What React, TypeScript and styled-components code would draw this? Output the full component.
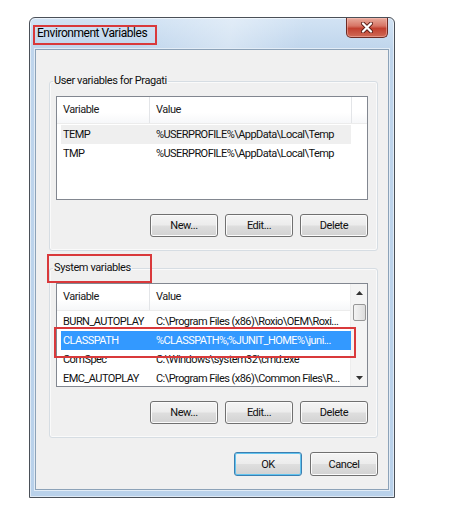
import React from 'react';
import styled, { createGlobalStyle } from 'styled-components';

interface EnvVar {
  name: string;
  value: string;
  hovered?: boolean;
  selected?: boolean;
  marked?: boolean;
}

const userVars: EnvVar[] = [
  { name: 'TEMP', value: '%USERPROFILE%\\AppData\\Local\\Temp', hovered: true },
  { name: 'TMP', value: '%USERPROFILE%\\AppData\\Local\\Temp' },
];

const systemVars: EnvVar[] = [
  { name: 'BURN_AUTOPLAY', value: 'C:\\Program Files (x86)\\Roxio\\OEM\\Roxi...' },
  { name: 'CLASSPATH', value: '%CLASSPATH%;%JUNIT_HOME%\\juni...', selected: true, marked: true },
  { name: 'ComSpec', value: 'C:\\Windows\\system32\\cmd.exe' },
  { name: 'EMC_AUTOPLAY', value: 'C:\\Program Files (x86)\\Common Files\\R...' },
];

const GlobalStyle = createGlobalStyle`
  html, body {
    margin: 0;
    padding: 0;
    background: #ffffff;
  }
  body {
    font-family: Roboto, "Liberation Sans", Arial, sans-serif;
    color: #111;
  }
`;

const Page = styled.div`
  width: 453px;
  height: 528px;
  box-sizing: border-box;
  padding: 17px 0 0 29px;
`;

const Window = styled.div`
  width: 366px;
  height: 481px;
  box-sizing: border-box;
  border: 1px solid #4a5058;
  border-radius: 6px 6px 0 0;
  background:
    linear-gradient(100deg, rgba(255,255,255,0) 30%, rgba(255,255,255,0.35) 55%, rgba(255,255,255,0) 75%) top / 100% 32px no-repeat,
    linear-gradient(180deg, #d2e3f4 0, #bfd5ec 32px, #b9d1ea 100%);
  box-shadow: inset 0 0 0 1px rgba(255, 255, 255, 0.55);
  display: flex;
  flex-direction: column;
`;

const TitleBar = styled.div`
  height: 31px;
  flex: none;
  display: flex;
  justify-content: space-between;
  align-items: flex-start;
  padding: 0 6px 0 3px;
`;

const Title = styled.span`
  position: relative;
  margin-top: 7px;
  padding: 0 0 0 4px;
  font-size: 12px;
  line-height: 16px;
  letter-spacing: -0.45px;
  color: #000;

  &::after {
    content: '';
    position: absolute;
    top: 0;
    left: 0;
    right: -10px;
    bottom: -4px;
    border: 2px solid #d9393b;
  }
`;

const CloseButton = styled.div`
  width: 42px;
  height: 20px;
  box-sizing: border-box;
  border: 1px solid #6d2b24;
  border-top: none;
  border-radius: 0 0 5px 5px;
  background: linear-gradient(180deg, #e8aa9c 0%, #d77565 42%, #c2402f 55%, #cf6a56 100%);
  box-shadow: inset 0 0 0 1px rgba(255, 200, 190, 0.45);
  display: flex;
  align-items: center;
  justify-content: center;
`;

const Client = styled.div`
  flex: none;
  height: 441px;
  margin: 0 5px;
  box-sizing: border-box;
  border: 1px solid #8ca2b8;
  box-shadow: 0 0 0 1px #e2ecf6;
  background: #f0f0f0;
  padding: 23px 10px 0 13px;
  display: flex;
  flex-direction: column;
`;

const Group = styled.fieldset`
  margin: 0 0 9px;
  padding: 7px 9px 13px 6px;
  border: 1px solid #d6dde3;
  border-radius: 3px;
  box-shadow: inset 0 0 0 1px #fafafa;
  min-width: 0;
`;

const Legend = styled.legend<{ $marked?: boolean }>`
  position: relative;
  margin-left: -3px;
  padding: 0 1px;
  font-size: 11px;
  line-height: 16px;
  letter-spacing: -0.4px;
  color: #111;

  &::after {
    content: '';
    display: ${(p) => (p.$marked ? 'block' : 'none')};
    position: absolute;
    top: -6px;
    left: -6px;
    right: -20px;
    bottom: -7px;
    border: 2px solid #d9393b;
  }
`;

const ListBox = styled.div`
  height: 104px;
  box-sizing: border-box;
  border: 1px solid #828790;
  background: #ffffff;
  display: flex;
`;

const ListMain = styled.div`
  flex: 1;
  min-width: 0;
  display: flex;
  flex-direction: column;
`;

const Header = styled.div`
  height: 26px;
  flex: none;
  display: flex;
  background: linear-gradient(180deg, #ffffff 0%, #ffffff 60%, #f6f7f9 100%);
  border-bottom: 1px solid #ececec;
`;

const HeaderCell = styled.div<{ $width?: number }>`
  ${(p) => (p.$width ? `width: ${p.$width}px;` : 'flex: 1;')}
  flex-shrink: 0;
  box-sizing: border-box;
  border-right: 1px solid #e3e5e8;
  padding-left: 6px;
  font-size: 11px;
  line-height: 26px;
  letter-spacing: -0.5px;
  color: #1a1a1a;

  &:last-child {
    border-right: none;
  }
`;

const Rows = styled.div`
  padding: 1px 0 0 4px;
  display: flex;
  flex-direction: column;
`;

const Row = styled.div<{ $hovered?: boolean; $selected?: boolean; $marked?: boolean }>`
  position: relative;
  width: 290px;
  height: 19px;
  display: flex;
  padding-left: 2px;
  box-sizing: border-box;
  background: ${(p) => (p.$selected ? '#3399ff' : p.$hovered ? '#efefef' : 'transparent')};
  color: ${(p) => (p.$selected ? '#ffffff' : '#111111')};

  &::after {
    content: '';
    display: ${(p) => (p.$marked ? 'block' : 'none')};
    position: absolute;
    top: -4px;
    left: -7px;
    right: -5px;
    bottom: -8px;
    border: 2px solid #d9393b;
    z-index: 2;
  }
`;

const Cell = styled.div<{ $width?: number }>`
  ${(p) => (p.$width ? `width: ${p.$width}px;` : 'flex: 1;')}
  flex-shrink: 0;
  overflow: hidden;
  white-space: nowrap;
  font-size: 11px;
  line-height: 19px;
  letter-spacing: -0.55px;
`;

const ScrollBar = styled.div`
  width: 16px;
  flex: none;
  background: #f4f4f4;
  border-left: 1px solid #ededed;
  display: flex;
  flex-direction: column;
  align-items: center;
`;

const ScrollArrow = styled.div`
  height: 17px;
  display: flex;
  align-items: center;
  justify-content: center;
`;

const Thumb = styled.div`
  margin-top: 3px;
  width: 13px;
  height: 17px;
  box-sizing: border-box;
  border: 1px solid #979797;
  border-radius: 2px;
  background: linear-gradient(90deg, #f3f3f3 0%, #e9e9e9 50%, #dcdcdc 100%);
`;

const ScrollSpacer = styled.div`
  flex: 1;
`;

const ButtonRow = styled.div<{ $top: number }>`
  display: flex;
  justify-content: flex-end;
  gap: 7px;
  margin-top: ${(p) => p.$top}px;
`;

const Button = styled.button<{ $default?: boolean; $height?: number }>`
  width: 68px;
  height: ${(p) => p.$height || 23}px;
  margin: 0;
  padding: 0;
  box-sizing: border-box;
  border: 1px solid ${(p) => (p.$default ? '#3c7fb1' : '#707070')};
  border-radius: 3px;
  background: linear-gradient(180deg, #f4f4f4 0%, #ececec 48%, #dedede 52%, #d2d2d2 100%);
  box-shadow: inset 0 0 0 1px ${(p) => (p.$default ? '#62c4ef' : '#fbfbfb')};
  font-family: Roboto, "Liberation Sans", Arial, sans-serif;
  font-size: 11px;
  letter-spacing: -0.45px;
  color: #111;
  cursor: default;
`;

const DialogButtons = styled.div`
  display: flex;
  justify-content: flex-end;
  gap: 8px;
  margin-top: 5px;
`;

const UpArrow = () => (
  <svg width="7" height="4" viewBox="0 0 7 4">
    <path d="M0 4 L3.5 0 L7 4 Z" fill="#333" />
  </svg>
);

const DownArrow = () => (
  <svg width="7" height="4" viewBox="0 0 7 4">
    <path d="M0 0 L3.5 4 L7 0 Z" fill="#333" />
  </svg>
);

const CloseIcon = () => (
  <svg width="12" height="11" viewBox="0 0 12 11">
    <path d="M2 1.5 L10 9.5 M10 1.5 L2 9.5" stroke="#5a1d16" strokeWidth="4" strokeLinecap="round" />
    <path d="M2 1.5 L10 9.5 M10 1.5 L2 9.5" stroke="#ffffff" strokeWidth="2.3" strokeLinecap="round" />
  </svg>
);

interface VarListProps {
  vars: EnvVar[];
  scroll?: boolean;
}

const VarList: React.FC<VarListProps> = ({ vars, scroll }) => (
  <ListBox>
    <ListMain>
      <Header>
        <HeaderCell $width={93}>Variable</HeaderCell>
        <HeaderCell $width={scroll ? undefined : 202}>Value</HeaderCell>
        {!scroll && <HeaderCell />}
      </Header>
      <Rows>
        {vars.map((v) => (
          <Row key={v.name} $hovered={v.hovered} $selected={v.selected} $marked={v.marked}>
            <Cell $width={93}>{v.name}</Cell>
            <Cell>{v.value}</Cell>
          </Row>
        ))}
      </Rows>
    </ListMain>
    {scroll && (
      <ScrollBar>
        <ScrollArrow><UpArrow /></ScrollArrow>
        <Thumb />
        <ScrollSpacer />
        <ScrollArrow><DownArrow /></ScrollArrow>
      </ScrollBar>
    )}
  </ListBox>
);

const EditButtons = () => (
  <ButtonRow $top={14}>
    <Button>New...</Button>
    <Button>Edit...</Button>
    <Button>Delete</Button>
  </ButtonRow>
);

export default function App() {
  return (
    <>
      <GlobalStyle />
      <Page>
        <Window>
          <TitleBar>
            <Title>Environment Variables</Title>
            <CloseButton><CloseIcon /></CloseButton>
          </TitleBar>
          <Client>
            <Group>
              <Legend>User variables for Pragati</Legend>
              <VarList vars={userVars} />
              <EditButtons />
            </Group>
            <Group>
              <Legend $marked>System variables</Legend>
              <VarList vars={systemVars} scroll />
              <EditButtons />
            </Group>
            <DialogButtons>
              <Button $default $height={24}>OK</Button>
              <Button $height={24}>Cancel</Button>
            </DialogButtons>
          </Client>
        </Window>
      </Page>
    </>
  );
}
